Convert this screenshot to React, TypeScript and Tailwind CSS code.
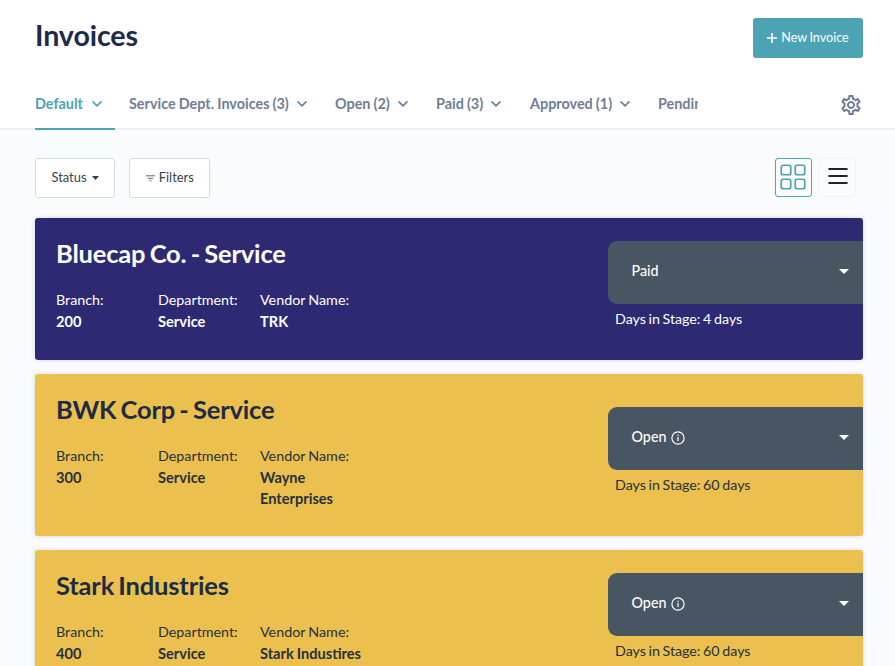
import { MdOutlineSettings } from "react-icons/md";

type Invoice = {
  title: string;
  branch: string;
  vendor: string;
  stage: string;
  days: string;
  info: boolean;
  card: string;
  heading: string;
  column: string;
};

const tabs = [
  { label: "Service Dept. Invoices (3)", width: "w-[206px]" },
  { label: "Open (2)", width: "w-[101px]" },
  { label: "Paid (3)", width: "w-[94px]" },
  { label: "Approved (1)", width: "w-[128px]" },
];

const invoices: Invoice[] = [
  {
    title: "Bluecap Co. - Service", branch: "200", vendor: "TRK", stage: "Paid", days: "4 days", info: false,
    card: "h-[141.5px] mb-[14.5px] bg-[#2e2973] text-white", heading: "text-white", column: "pt-[23px]",
  },
  {
    title: "BWK Corp - Service", branch: "300", vendor: "Wayne Enterprises", stage: "Open", days: "60 days", info: true,
    card: "h-[162px] mb-[14px] bg-[#ebc04f] text-[#26313d]", heading: "text-[#1d2b45]", column: "pt-[33px]",
  },
  {
    title: "Stark Industries", branch: "400", vendor: "Stark Industires", stage: "Open", days: "60 days", info: true,
    card: "h-[162px] mb-[14px] bg-[#ebc04f] text-[#26313d]", heading: "text-[#1d2b45]", column: "pt-[23px]",
  },
];

function Chevron() {
  return (
    <svg width="10" height="6" viewBox="0 0 10 6" fill="none" stroke="currentColor" strokeWidth="1.6" strokeLinecap="round" strokeLinejoin="round" className="shrink-0">
      <path d="M1 .9l4 4 4-4" />
    </svg>
  );
}

function Info() {
  return (
    <svg width="14" height="14" viewBox="0 0 14 14" fill="none" stroke="currentColor" strokeWidth="1.2" className="mt-px ml-[5px]">
      <circle cx="7" cy="7" r="6.1" />
      <path d="M7 6.1v4M7 3.7v1.3" />
    </svg>
  );
}

function Field({ label, value }: { label: string; value: string }) {
  return (
    <div className="w-[102px] shrink-0">
      <div className="pb-px text-[14.3px] whitespace-nowrap [word-spacing:-0.5px]">{label}:</div>
      <div className="text-[14.6px] font-bold [word-spacing:-0.5px]">{value}</div>
    </div>
  );
}

function Card({ invoice }: { invoice: Invoice }) {
  return (
    <article className={`flex overflow-hidden rounded-[3px] shadow-[0_0_4px_rgba(50,60,90,0.2)] ${invoice.card}`}>
      <div className="w-[573px] shrink-0 pt-[17px] pl-[21px]">
        <h2 className={`text-[25.5px] leading-[36px] font-bold tracking-[-0.17px] [word-spacing:-1.8px] ${invoice.heading}`}>{invoice.title}</h2>
        <div className="mt-[18px] flex leading-[21px]">
          <Field label="Branch" value={invoice.branch} />
          <Field label="Department" value="Service" />
          <Field label="Vendor Name" value={invoice.vendor} />
        </div>
      </div>
      <div className={`flex-1 text-[14.3px] ${invoice.column}`}>
        <div className="flex h-[63px] items-center rounded-l-[9px] bg-[#485563] pr-[14px] pb-[3px] pl-[23.5px] font-medium text-white">
          <span>{invoice.stage}</span>
          {invoice.info && <Info />}
          <svg width="10" height="5" viewBox="0 0 10 5" fill="currentColor" className="ml-auto">
            <path d="M0 0h10L5 5z" />
          </svg>
        </div>
        <p className="pt-[3.5px] pl-[7px] leading-[21px] tracking-[-0.05px] [word-spacing:-0.9px]">Days in Stage: {invoice.days}</p>
      </div>
    </article>
  );
}

export default function App() {
  return (
    <div className="h-[666px] w-[895px] overflow-hidden bg-[#f9fbfd] font-['Lato',sans-serif]">
      <header className="h-[130px] border-b-2 border-[#edf0f4] bg-white">
        <div className="flex h-[80px] justify-between pt-[18px] pr-[32px] pl-[35px]">
          <h1 className="text-[28.6px] leading-[34px] font-bold tracking-[-0.1px] text-[#1d2b4b]">Invoices</h1>
          <button className="flex h-[40px] w-[110px] items-center justify-center gap-[4px] rounded-[3px] bg-[#4ba3b3] text-[12.6px] text-white [word-spacing:-0.7px]">
            <svg width="10" height="10" viewBox="0 0 10 10" stroke="currentColor" strokeWidth="1.6" strokeLinecap="round"><path d="M5 .5v9M.5 5h9" /></svg>
            New Invoice
          </button>
        </div>
        <div className="flex h-[50px] pl-[35px] text-[14.4px] font-bold text-[#6f7d98] [word-spacing:-0.4px]">
          <nav className="flex w-[663px] overflow-hidden whitespace-nowrap">
            <a className="mr-[14px] flex w-[80px] shrink-0 items-center gap-[9px] border-b-2 border-[#4ba3b3] pb-px text-[#4ba3b3]">Default<Chevron /></a>
            {tabs.map((tab) => (
              <a key={tab.label} className={`flex shrink-0 items-center gap-[8px] border-b-2 border-transparent pb-px ${tab.width}`}>
                {tab.label}<Chevron />
              </a>
            ))}
            <a className="flex shrink-0 items-center border-b-2 border-transparent pb-px">Pending</a>
          </nav>
          <button className="ml-[141px] flex items-center"><MdOutlineSettings size={24} /></button>
        </div>
      </header>
      <main className="pr-[32px] pl-[35px]">
        <div className="flex h-[88px] pt-[28px] text-[12.9px] text-[#35404f]">
          <button className="flex h-[40px] w-[80px] items-center justify-center gap-[5px] rounded-[3px] border border-[#d6dbdf] bg-white">
            Status
            <svg width="7" height="4" viewBox="0 0 7 4" fill="currentColor"><path d="M0 0h7L3.5 4z" /></svg>
          </button>
          <button className="ml-[14px] flex h-[40px] w-[80.5px] items-center justify-center gap-[4px] rounded-[3px] border border-[#d6dbdf] bg-white pl-px">
            <svg width="9" height="7" viewBox="0 0 9 7" stroke="currentColor" strokeWidth="0.8"><path d="M0 .8h9M2 3.3h5M3.5 5.8h2" /></svg>
            Filters
          </button>
          <button className="ml-auto flex h-[39px] w-[37px] items-center justify-center rounded-[3px] border border-[#4ba3b3] bg-[#fbfdfe] pr-px pb-px text-[#4ba3b3]">
            <svg width="26" height="26" viewBox="0 0 26 26" fill="none" stroke="currentColor" strokeWidth="1.7" className="shrink-0">
              <rect x="1.25" y="1.25" width="9.5" height="9.5" rx="2" /><rect x="15.25" y="1.25" width="9.5" height="9.5" rx="2" />
              <rect x="1.25" y="15.25" width="9.5" height="9.5" rx="2" /><rect x="15.25" y="15.25" width="9.5" height="9.5" rx="2" />
            </svg>
          </button>
          <button className="mr-[7px] ml-[7px] flex h-[39px] w-[37px] items-center justify-center rounded-[3px] border border-[#f0f2f5] bg-[#fbfcfe] pb-[3px] text-[#202329]">
            <svg width="20" height="18" viewBox="0 0 20 18" stroke="currentColor" strokeWidth="2" strokeLinecap="round"><path d="M1.2 2h17.6M1.2 9h17.6M1.2 16h17.6" /></svg>
          </button>
        </div>
        {invoices.map((invoice) => <Card key={invoice.title} invoice={invoice} />)}
      </main>
    </div>
  );
}
